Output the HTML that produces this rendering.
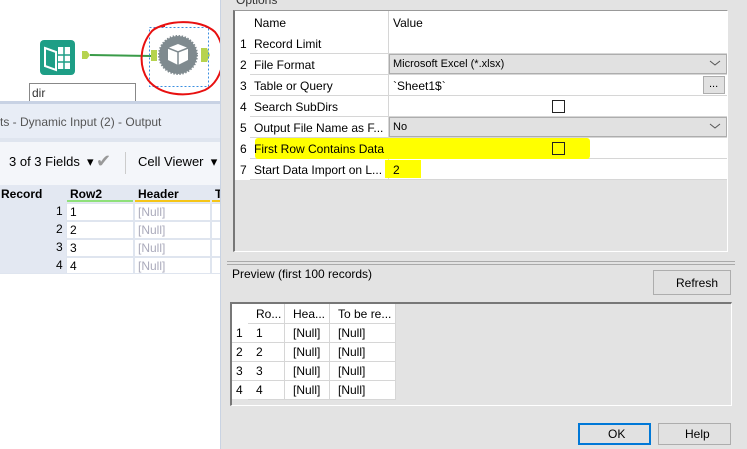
<!DOCTYPE html>
<html><head><style>
*{margin:0;padding:0;box-sizing:border-box}
body{width:747px;height:449px;position:relative;overflow:hidden;background:#fff;font-family:"Liberation Sans",sans-serif;font-size:12px;color:#000}
.a{position:absolute}
.t{position:absolute;white-space:nowrap}
</style></head><body>
<!-- canvas -->
<svg class="a" style="left:0;top:0" width="220" height="102">
<rect x="40" y="40" width="35" height="35" rx="4" fill="#1e9e86"/>
<path d="M45 48 L56 52 L56 70 L45 66Z" fill="none" stroke="#fff" stroke-width="2"/>
<rect x="58" y="47" width="12" height="22" fill="#fff"/>
<path d="M64 47v22M58 55h12M58 62h12" stroke="#1e9e86" stroke-width="1.5"/>
<path d="M82 51h5l3 4l-3 4h-5z" fill="#b6d34e"/>
<line x1="90" y1="55" x2="151" y2="56" stroke="#3a9b48" stroke-width="2"/>
<path d="M151 50h6v11h-6z" fill="#b6d34e"/>
<circle cx="178" cy="55" r="19" fill="#7f8a8f" stroke="#7f8a8f" stroke-width="2" stroke-dasharray="1.5 1.5"/>
<circle cx="178" cy="55" r="17" fill="#7f8a8f"/>
<path d="M168 48l10 -4l10 4v12l-10 5l-10-5z" fill="#fff"/>
<path d="M178 52v13M168 48l10 4l10-4" stroke="#7f8a8f" stroke-width="1.5" fill="none"/>
<path d="M201 48h6l3 7l-3 7h-6z" fill="#b6d34e"/>
<rect x="149.5" y="27.5" width="59" height="59" fill="none" stroke="#3b8fe0" stroke-dasharray="2 2"/>
<path d="M152 31C165 20 200 18 215 32C228 48 225 80 205 90C185 98 160 95 148 80C138 65 140 45 152 31C156 27 160 26 165 26" fill="none" stroke="#e81010" stroke-width="2"/>
<path d="M29.5 102V83.5H135.5V102" fill="none" stroke="#888"/>
</svg>
<div class="t" style="left:32px;top:86px;font-size:12px;color:#333">dir</div>
<div class="a" style="left:0;top:101px;width:220px;height:3px;background:#c8d2e4"></div>
<div class="a" style="left:0;top:104px;width:220px;height:34px;background:#e8edf6"></div>
<div class="t" style="left:0;top:115px;color:#555;font-size:12px">ts - Dynamic Input (2) - Output</div>
<div class="a" style="left:0;top:138px;width:220px;height:4px;background:#dfe5ef"></div>
<div class="a" style="left:0;top:142px;width:220px;height:43px;background:#f4f6fa"></div>
<div class="t" style="left:9px;top:154px;font-size:13px">3 of 3 Fields &nbsp;▾</div>
<div class="t" style="left:96px;top:151px;font-size:18px;color:#999">✔</div>
<div class="a" style="left:125px;top:152px;width:1px;height:22px;background:#ccc"></div>
<div class="t" style="left:138px;top:154px;font-size:13px">Cell Viewer &nbsp;▾</div>
<div class="a" style="left:0;top:185px;width:220px;height:18px;background:#e3e8f2"></div>
<div class="t" style="left:1px;top:187px;font-weight:bold;font-size:12px">Record</div>
<div class="t" style="left:70px;top:187px;font-weight:bold;font-size:12px">Row2</div>
<div class="t" style="left:138px;top:187px;font-weight:bold;font-size:12px">Header</div>
<div class="t" style="left:215px;top:187px;font-weight:bold;font-size:12px">T</div>
<div class="a" style="left:67px;top:200px;width:66px;height:2px;background:#8fe07a"></div>
<div class="a" style="left:135px;top:200px;width:75px;height:2px;background:#f5c518"></div>
<div class="a" style="left:212px;top:200px;width:8px;height:2px;background:#f5c518"></div>
<div class="a" style="left:0;top:203px;width:66px;height:70px;background:#e3e8f2"></div>
<div class="a" style="left:66px;top:203px;width:154px;height:70px;background:#dfe5ef"></div>
<div class="a" style="left:0;top:273px;width:220px;height:1px;background:#dfe5ef"></div>
<div class="a" style="left:67px;top:204px;width:66px;height:16px;background:#fff"></div>
<div class="a" style="left:135px;top:204px;width:75px;height:16px;background:#fff"></div>
<div class="a" style="left:212px;top:204px;width:8px;height:16px;background:#fff"></div>
<div class="a" style="left:67px;top:222px;width:66px;height:16px;background:#fff"></div>
<div class="a" style="left:135px;top:222px;width:75px;height:16px;background:#fff"></div>
<div class="a" style="left:212px;top:222px;width:8px;height:16px;background:#fff"></div>
<div class="a" style="left:67px;top:240px;width:66px;height:16px;background:#fff"></div>
<div class="a" style="left:135px;top:240px;width:75px;height:16px;background:#fff"></div>
<div class="a" style="left:212px;top:240px;width:8px;height:16px;background:#fff"></div>
<div class="a" style="left:67px;top:258px;width:66px;height:15px;background:#fff"></div>
<div class="a" style="left:135px;top:258px;width:75px;height:15px;background:#fff"></div>
<div class="a" style="left:212px;top:258px;width:8px;height:15px;background:#fff"></div>
<div class="t" style="left:56px;top:204px">1</div><div class="t" style="left:70px;top:205px">1</div><div class="t" style="left:138px;top:205px;color:#aab">[Null]</div>
<div class="t" style="left:56px;top:222px">2</div><div class="t" style="left:70px;top:223px">2</div><div class="t" style="left:138px;top:223px;color:#aab">[Null]</div>
<div class="t" style="left:56px;top:240px">3</div><div class="t" style="left:70px;top:241px">3</div><div class="t" style="left:138px;top:241px;color:#aab">[Null]</div>
<div class="t" style="left:56px;top:258px">4</div><div class="t" style="left:70px;top:259px">4</div><div class="t" style="left:138px;top:259px;color:#aab">[Null]</div>

<!-- dialog -->
<div class="a" style="left:220px;top:0;width:527px;height:449px;background:#e3e3e3;border-left:1px solid #c9d3e3"></div>
<div class="a" style="left:233px;top:10px;width:495px;height:242px;background:#e3e3e3;border:1px solid #fff;border-left:2px solid #777;border-top:1px solid #999"></div>
<div class="a" style="left:235px;top:11px;width:492px;height:169px;background:#fff"></div>
<div class="a" style="left:250px;top:33px;width:477px;height:147px;background:#ccc"></div>
<div class="a" style="left:250px;top:34px;width:138px;height:146px;background:#fff;border-bottom:1px solid #d6d6d6"></div>
<div class="a" style="left:389px;top:34px;width:338px;height:146px;background:#fff"></div>
<div class="a" style="left:250px;top:33px;width:477px;height:1px;background:#fff"></div>
<svg class="a" style="left:250px;top:11px" width="477" height="170"><g stroke="#d6d6d6">
<line x1="0" y1="42.5" x2="477" y2="42.5"/><line x1="0" y1="63.5" x2="477" y2="63.5"/><line x1="0" y1="84.5" x2="477" y2="84.5"/><line x1="0" y1="105.5" x2="477" y2="105.5"/><line x1="0" y1="126.5" x2="477" y2="126.5"/><line x1="0" y1="147.5" x2="477" y2="147.5"/><line x1="0" y1="168.5" x2="477" y2="168.5"/><line x1="138.5" y1="0" x2="138.5" y2="169"/></g></svg>
<!-- combos -->
<div class="a" style="left:389px;top:54px;width:338px;height:20px;background:#e1e1e1;border:1px solid #adadad"></div>
<div class="t" style="left:393px;top:58px;font-size:11px">Microsoft Excel (*.xlsx)</div>
<svg class="a" style="left:709px;top:59px" width="12" height="8"><path d="M1 2l5 4l5-4" fill="none" stroke="#555"/></svg>
<div class="a" style="left:389px;top:117px;width:338px;height:20px;background:#e1e1e1;border:1px solid #adadad"></div>
<div class="t" style="left:393px;top:121px;font-size:11px">No</div>
<svg class="a" style="left:709px;top:122px" width="12" height="8"><path d="M1 2l5 4l5-4" fill="none" stroke="#555"/></svg>
<div class="a" style="left:703px;top:76px;width:22px;height:18px;background:#e1e1e1;border:1px solid #adadad"></div>
<div class="t" style="left:709px;top:78px;font-size:11px">...</div>
<!-- highlights -->
<div class="a" style="left:255px;top:138px;width:335px;height:21px;background:#ffff00;border-radius:3px"></div>
<div class="a" style="left:385px;top:160px;width:36px;height:18px;background:#ffff00"></div>
<div class="a" style="left:552px;top:100px;width:13px;height:13px;border:1px solid #222;background:#fff"></div>
<div class="a" style="left:552px;top:142px;width:13px;height:13px;border:1px solid #222"></div>
<div class="t" style="left:254px;top:16px">Name</div><div class="t" style="left:393px;top:16px">Value</div>
<div class="t" style="left:240px;top:37px">1</div><div class="t" style="left:254px;top:37px">Record Limit</div>
<div class="t" style="left:240px;top:58px">2</div><div class="t" style="left:254px;top:58px">File Format</div>
<div class="t" style="left:240px;top:79px">3</div><div class="t" style="left:254px;top:79px">Table or Query</div><div class="t" style="left:393px;top:79px">`Sheet1$`</div>
<div class="t" style="left:240px;top:100px">4</div><div class="t" style="left:254px;top:100px">Search SubDirs</div>
<div class="t" style="left:240px;top:121px">5</div><div class="t" style="left:254px;top:121px">Output File Name as F...</div>
<div class="t" style="left:240px;top:142px">6</div><div class="t" style="left:254px;top:142px">First Row Contains Data</div>
<div class="t" style="left:240px;top:163px">7</div><div class="t" style="left:254px;top:163px">Start Data Import on L...</div><div class="t" style="left:393px;top:163px">2</div>
<!-- preview -->
<div class="a" style="left:227px;top:261px;width:508px;height:1px;background:#aaa"></div>
<div class="a" style="left:227px;top:264px;width:508px;height:1px;background:#aaa"></div>
<div class="t" style="left:232px;top:267px">Preview (first 100 records)</div>
<div class="a" style="left:653px;top:270px;width:78px;height:25px;background:#e1e1e1;border:1px solid #adadad"></div>
<div class="t" style="left:676px;top:276px">Refresh</div>
<div class="a" style="left:230px;top:302px;width:502px;height:104px;border:1px solid #fff;border-left:2px solid #777;border-top:2px solid #777"></div>
<div class="a" style="left:232px;top:304px;width:164px;height:95px;background:#fff"></div>
<svg class="a" style="left:232px;top:304px" width="164" height="96"><g stroke="#d6d6d6">
<line x1="16" y1="19.5" x2="164" y2="19.5"/><line x1="0" y1="38.5" x2="164" y2="38.5"/><line x1="0" y1="57.5" x2="164" y2="57.5"/><line x1="0" y1="76.5" x2="164" y2="76.5"/><line x1="16" y1="95.5" x2="164" y2="95.5"/>
<line x1="52.5" y1="0" x2="52.5" y2="96"/><line x1="97.5" y1="0" x2="97.5" y2="96"/><line x1="163.5" y1="0" x2="163.5" y2="96"/></g></svg>
<div class="t" style="left:256px;top:307px">Ro...</div><div class="t" style="left:293px;top:307px">Hea...</div><div class="t" style="left:338px;top:307px">To be re...</div>
<div class="t" style="left:236px;top:326px">1</div><div class="t" style="left:256px;top:326px">1</div><div class="t" style="left:293px;top:326px">[Null]</div><div class="t" style="left:338px;top:326px">[Null]</div>
<div class="t" style="left:236px;top:345px">2</div><div class="t" style="left:256px;top:345px">2</div><div class="t" style="left:293px;top:345px">[Null]</div><div class="t" style="left:338px;top:345px">[Null]</div>
<div class="t" style="left:236px;top:364px">3</div><div class="t" style="left:256px;top:364px">3</div><div class="t" style="left:293px;top:364px">[Null]</div><div class="t" style="left:338px;top:364px">[Null]</div>
<div class="t" style="left:236px;top:383px">4</div><div class="t" style="left:256px;top:383px">4</div><div class="t" style="left:293px;top:383px">[Null]</div><div class="t" style="left:338px;top:383px">[Null]</div>
<div class="a" style="left:578px;top:423px;width:73px;height:22px;background:#e1e1e1;border:2px solid #0078d7"></div>
<div class="t" style="left:608px;top:427px">OK</div>
<div class="a" style="left:658px;top:423px;width:73px;height:22px;background:#e1e1e1;border:1px solid #adadad"></div>
<div class="t" style="left:685px;top:427px">Help</div>
<div class="t" style="left:236px;top:-7px;color:#333">Options</div>
</body></html>
